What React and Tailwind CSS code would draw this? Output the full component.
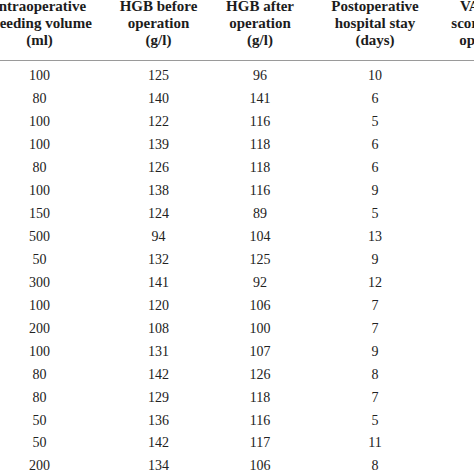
import React from "react";

const headers = [
  ["Intraoperative", "bleeding volume", "(ml)"],
  ["HGB before", "operation", "(g/l)"],
  ["HGB after", "operation", "(g/l)"],
  ["Postoperative", "hospital stay", "(days)"],
  ["VAS pain", "score before", "operation"],
];

// last column is outside the crop, so its cells stay empty
const rows = [
  [100, 125, 96, 10],
  [80, 140, 141, 6],
  [100, 122, 116, 5],
  [100, 139, 118, 6],
  [80, 126, 118, 6],
  [100, 138, 116, 9],
  [150, 124, 89, 5],
  [500, 94, 104, 13],
  [50, 132, 125, 9],
  [300, 141, 92, 12],
  [100, 120, 106, 7],
  [200, 108, 100, 7],
  [100, 131, 107, 9],
  [80, 142, 126, 8],
  [80, 129, 118, 7],
  [50, 136, 116, 5],
  [50, 142, 117, 11],
  [200, 134, 106, 8],
];

const App = () => {
  return (
    <div
      className="w-[474px] h-[474px] overflow-hidden bg-white"
      style={{ fontFamily: '"Liberation Serif", "Times New Roman", serif' }}
    >
      {/* Header (table is wider than the crop, first column starts off-screen) */}
      <div className="ml-[-21px] grid grid-cols-[121px_117px_86px_144px_86px] text-[15px] leading-[17.5px] font-bold text-[#1c1c1c]">
        {headers.map((lines, i) => (
          <div key={i} className="text-center whitespace-nowrap">
            <div className="leading-[12px] mb-[2.7px]">{lines[0]}</div>
            <div>{lines[1]}</div>
            <div>{lines[2]}</div>
          </div>
        ))}
      </div>

      {/* Rule under header */}
      <div className="mt-[10px] h-[1.5px] bg-[#9a9a9a]" />

      {/* Body */}
      <div className="ml-[-21px] mt-[4.3px] grid grid-cols-[121px_117px_86px_144px_86px] text-[14px] leading-[22.94px] text-[#222]">
        {rows.map((row, i) => (
          <React.Fragment key={i}>
            {row.map((val, j) => (
              <div key={j} className="text-center">
                {val}
              </div>
            ))}
            <div />
          </React.Fragment>
        ))}
      </div>
    </div>
  );
};

export default App;
